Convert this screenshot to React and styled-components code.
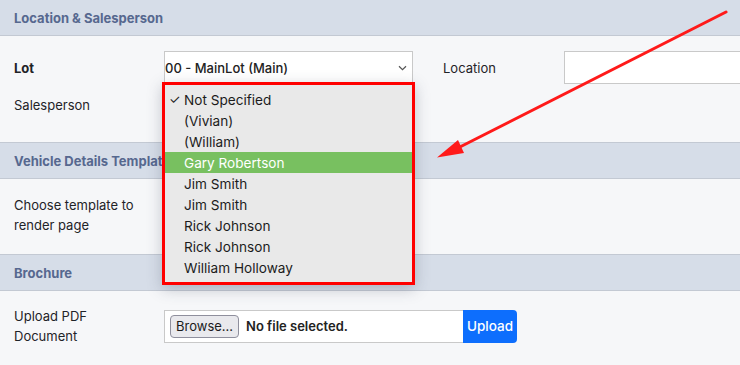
import React from "react";
import styled, { createGlobalStyle } from "styled-components";

const Global = createGlobalStyle`
  html, body { margin: 0; padding: 0; }
  body {
    background: #f6f7f9;
    font-family: Inter, "Liberation Sans", Arial, sans-serif;
    font-size: 13px;
    color: #1f2328;
    overflow: hidden;
    width: 740px;
    height: 365px;
  }
  * { box-sizing: border-box; }
`;

const Page = styled.div`
  position: relative;
  width: 740px;
  height: 365px;
  overflow: hidden;
  background: #f6f7f9;
`;

const SectionHeader = styled.div`
  height: ${(p) => (p.$first ? "36px" : "37px")};
  background: #d6dde8;
  border-top: ${(p) => (p.$first ? "none" : "1px solid #c3c9d3")};
  border-bottom: 1px solid #c3c9d3;
  display: flex;
  align-items: center;
  padding: 0 14px;
  font-weight: 700;
  font-size: 13px;
  color: #56688f;
`;

const SectionBody = styled.div`
  height: ${(p) => p.$h}px;
  padding: ${(p) => p.$pad};
  display: flex;
  flex-direction: column;
  gap: 4px;
`;

const Row = styled.div`
  display: flex;
  align-items: center;
  min-height: 33px;
`;

const Label = styled.div`
  width: ${(p) => p.$w || 150}px;
  flex: none;
  font-weight: ${(p) => (p.$bold ? 700 : 400)};
  margin-left: ${(p) => p.$ml || 0}px;
  line-height: 20px;
  color: #1f2328;
`;

const Slot = styled.div`
  position: relative;
  width: 249px;
  height: 33px;
  flex: none;
`;

const SelectBox = styled.div`
  width: 249px;
  height: 33px;
  flex: none;
  background: #fff;
  border: 1px solid #c9c9c9;
  display: flex;
  align-items: center;
  justify-content: space-between;
  padding: 0 5px 0 0;
  font-weight: 500;
  color: #222;
`;

const TextInput = styled.div`
  width: 200px;
  height: 33px;
  background: #fff;
  border: 1px solid #c9c9c9;
  flex: none;
`;

const Listbox = styled.div`
  position: absolute;
  top: -6px;
  left: -2px;
  width: 253px;
  height: 203px;
  border: 3px solid #ff0000;
  background: #e9e9e9;
  box-shadow: 0 4px 14px rgba(60, 70, 90, 0.28);
  padding: 4px 0;
  z-index: 2;
`;

const Option = styled.div`
  height: 21px;
  display: flex;
  align-items: center;
  padding-left: 19px;
  position: relative;
  background: ${(p) => (p.$active ? "#78c060" : "transparent")};
  color: ${(p) => (p.$active ? "#fff" : "#1c1c1c")};
  font-size: 13.6px;
`;

const Check = styled.span`
  position: absolute;
  left: 4px;
  top: 2px;
  font-size: 13px;
`;

const FileBox = styled.div`
  display: flex;
  height: 33px;
`;

const FileField = styled.div`
  width: 299px;
  height: 33px;
  background: #fff;
  border: 1px solid #c9c9c9;
  border-right: none;
  display: flex;
  align-items: center;
  padding-left: 5px;
  gap: 7px;
`;

const BrowseButton = styled.div`
  height: 23px;
  padding: 0 5px;
  border: 1px solid #8f8f9d;
  border-radius: 4px;
  background: #e9e9ed;
  display: flex;
  align-items: center;
  font-size: 13px;
  color: #1b1b1b;
`;

const FileText = styled.span`
  font-weight: 600;
  color: #222;
`;

const UploadButton = styled.div`
  width: 54px;
  height: 33px;
  background: #0d6efd;
  color: #fff;
  border-radius: 0 4px 4px 0;
  display: flex;
  align-items: center;
  justify-content: center;
  font-weight: 500;
  font-size: 13.5px;
`;

const Annotation = styled.svg`
  position: absolute;
  left: 0;
  top: 0;
  pointer-events: none;
  z-index: 3;
`;

const Chevron = () => (
  <svg width="9" height="6" viewBox="0 0 9 6">
    <path d="M1 1.2 L4.5 4.6 L8 1.2" fill="none" stroke="#555" strokeWidth="1.2" />
  </svg>
);

const options = [
  "Not Specified",
  "(Vivian)",
  "(William)",
  "Gary Robertson",
  "Jim Smith",
  "Jim Smith",
  "Rick Johnson",
  "Rick Johnson",
  "William Holloway",
];

export default function App() {
  return (
    <Page>
      <Global />
      <SectionHeader $first>Location &amp; Salesperson</SectionHeader>
      <SectionBody $h={106} $pad="15px 0 0 14px">
        <Row>
          <Label $bold>Lot</Label>
          <SelectBox>
            <span>00 - MainLot (Main)</span>
            <Chevron />
          </SelectBox>
          <Label $ml={30} $w={121}>Location</Label>
          <TextInput />
        </Row>
        <Row>
          <Label>Salesperson</Label>
          <Slot>
            <Listbox>
              {options.map((o, i) => (
                <Option key={i} $active={i === 3}>
                  {i === 0 && <Check>✓</Check>}
                  {o}
                </Option>
              ))}
            </Listbox>
          </Slot>
        </Row>
      </SectionBody>
      <SectionHeader>Vehicle Details Template</SectionHeader>
      <SectionBody $h={75} $pad="16px 0 0 14px">
        <Row>
          <Label>
            Choose template to
            <br />
            render page
          </Label>
        </Row>
      </SectionBody>
      <SectionHeader>Brochure</SectionHeader>
      <SectionBody $h={74} $pad="15px 0 0 14px">
        <Row>
          <Label>
            Upload PDF
            <br />
            Document
          </Label>
          <FileBox>
            <FileField>
              <BrowseButton>Browse...</BrowseButton>
              <FileText>No file selected.</FileText>
            </FileField>
            <UploadButton>Upload</UploadButton>
          </FileBox>
        </Row>
      </SectionBody>
      <Annotation width="740" height="365" viewBox="0 0 740 365">
        <line x1="726" y1="12" x2="452" y2="151" stroke="#ff1a1a" strokeWidth="3" strokeLinecap="round" />
        <polygon points="437,157.5 458,140 464,153" fill="#ff1a1a" />
      </Annotation>
    </Page>
  );
}
